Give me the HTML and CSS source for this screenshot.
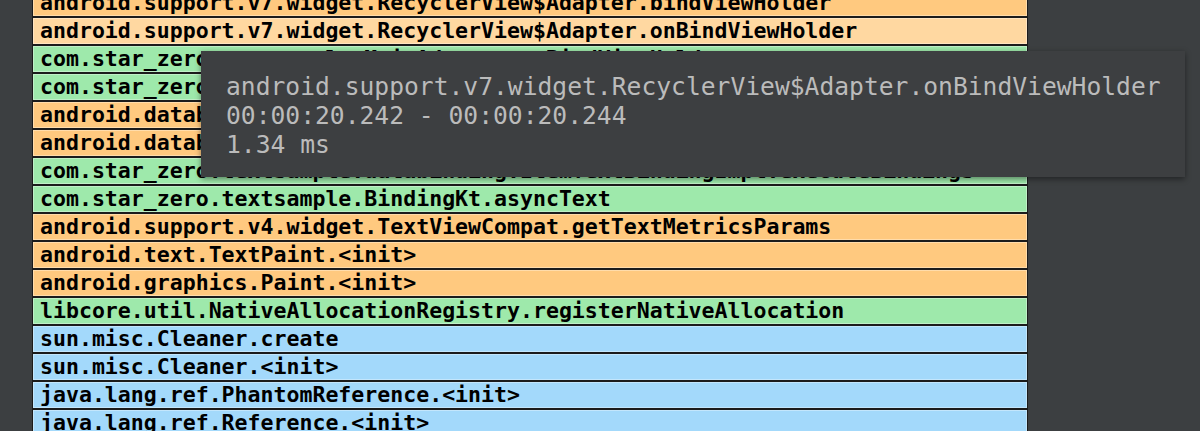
FILE: index.html
```html
<!DOCTYPE html>
<html>
<head>
<meta charset="utf-8">
<link rel="stylesheet" href="styles.css">
</head>
<body>
<div class="flame">
  <div class="bar orange">android.support.v7.widget.RecyclerView$Adapter.bindViewHolder</div>
  <div class="bar orange-hi">android.support.v7.widget.RecyclerView$Adapter.onBindViewHolder</div>
  <div class="bar green">com.star_zero.textsample.MainAdapter.onBindViewHolder</div>
  <div class="bar green">com.star_zero.textsample.MainAdapter$ViewHolder.bind</div>
  <div class="bar orange">android.databinding.ViewDataBinding.executePendingBindings</div>
  <div class="bar orange">android.databinding.ViewDataBinding.executeBindingsInternal</div>
  <div class="bar green">com.star_zero.textsample.databinding.ItemTextBindingImpl.executeBindings</div>
  <div class="bar green">com.star_zero.textsample.BindingKt.asyncText</div>
  <div class="bar orange">android.support.v4.widget.TextViewCompat.getTextMetricsParams</div>
  <div class="bar orange">android.text.TextPaint.&lt;init&gt;</div>
  <div class="bar orange">android.graphics.Paint.&lt;init&gt;</div>
  <div class="bar green">libcore.util.NativeAllocationRegistry.registerNativeAllocation</div>
  <div class="bar blue">sun.misc.Cleaner.create</div>
  <div class="bar blue">sun.misc.Cleaner.&lt;init&gt;</div>
  <div class="bar blue">java.lang.ref.PhantomReference.&lt;init&gt;</div>
  <div class="bar blue">java.lang.ref.Reference.&lt;init&gt;</div>
</div>
<div class="tooltip">
  <div class="tip-line">android.support.v7.widget.RecyclerView$Adapter.onBindViewHolder</div>
  <div class="tip-line">00:00:20.242 - 00:00:20.244</div>
  <div class="tip-line">1.34 ms</div>
</div>
</body>
</html>
```
FILE: styles.css
```css
html, body {
  margin: 0;
  padding: 0;
  background: #3c3f41;
  overflow: hidden;
  height: 431px;
}

.flame {
  display: flex;
  flex-direction: column;
  width: 996px;
  margin: -11px 0 0 32px;
}

.bar {
  box-sizing: border-box;
  height: 28px;
  border: 1px solid #1c1c1c;
  padding: 0 7px;
  font-family: "DejaVu Sans Mono", monospace;
  font-weight: bold;
  font-size: 21.55px;
  line-height: 26px;
  color: #000;
  white-space: nowrap;
  overflow: hidden;
  box-shadow: inset 0 0 0 1px rgba(255, 255, 255, 0.35);
}

.orange { background: #ffc97f; }
.orange-hi { background: #ffd8a1; }
.green { background: #9ee9ab; }
.blue { background: #a3d9fb; }

.tooltip {
  position: absolute;
  left: 201px;
  top: 51px;
  width: 984px;
  height: 126px;
  box-sizing: border-box;
  padding: 21px 25px;
  background: #3d3f41;
  box-shadow: 0 2px 6px rgba(0, 0, 0, 0.45);
  font-family: "DejaVu Sans Mono", monospace;
  font-size: 24.65px;
  line-height: 29px;
  color: #bbbbbb;
  white-space: nowrap;
}
```
